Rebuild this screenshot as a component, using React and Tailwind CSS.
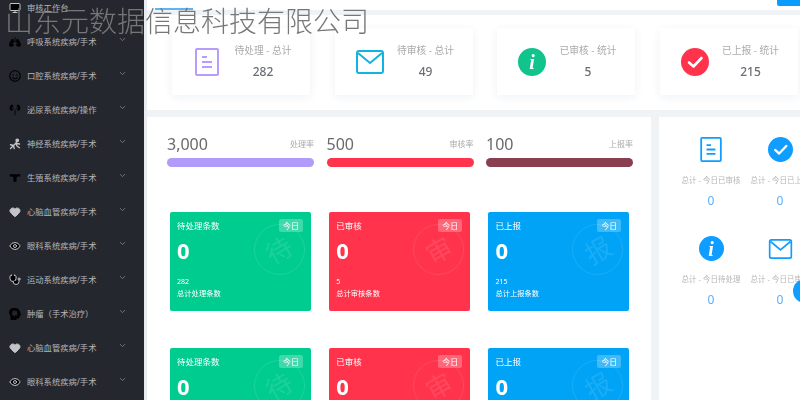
import React from "react";
import { ChevronDown, Stethoscope, MonitorCheck, Heart, Eye } from "lucide-react";
import { FaLungs, FaHeadSideVirus, FaRegSmile } from "react-icons/fa";
import { GiKidneys } from "react-icons/gi";

const font = { fontFamily: '"Noto Sans", "Noto Sans CJK SC", sans-serif' };

const Neuron = (p) => (
  <svg viewBox="0 0 16 16" fill="none" stroke="currentColor" strokeWidth="1.8" strokeLinecap="round" {...p}>
    <path d="M2 14l4-4 3-3 2-4M6 10l-4-1M9 7l5 1M9 7l2 4 3 2M6 10l1 4" />
    <circle cx="11" cy="3" r="1.6" fill="currentColor" />
  </svg>
);
const Uterus = (p) => (
  <svg viewBox="0 0 16 16" fill="currentColor" {...p}>
    <path d="M1 3h14v3h-3c-1 0-1.500 1-2 2.500V13H6V8.500C5.500 7 5 6 4 6H1z" />
  </svg>
);

const side = [
  [MonitorCheck, "审核工作台"],
  [FaLungs, "呼吸系统疾病/手术", 1],
  [FaRegSmile, "口腔系统疾病/手术", 1],
  [GiKidneys, "泌尿系统疾病/操作", 1],
  [Neuron, "神经系统疾病/手术", 1],
  [Uterus, "生殖系统疾病/手术", 1],
  [Heart, "心脑血管疾病/手术", 1, 1],
  [Eye, "眼科系统疾病/手术", 1],
  [Stethoscope, "运动系统疾病/手术", 1],
  [FaHeadSideVirus, "肿瘤（手术治疗）", 1],
  [Heart, "心脑血管疾病/手术", 1, 1],
  [Eye, "眼科系统疾病/手术", 1],
];

const DocIcon = ({ className }) => (
  <svg viewBox="0 0 24 28" fill="none" stroke="currentColor" strokeWidth="2" className={className}>
    <rect x="1" y="1" width="22" height="26" rx="1" />
    <path d="M7 9h5M7 14h10M7 19h10" />
  </svg>
);
const MailIcon = ({ className }) => (
  <svg viewBox="0 0 28 24" fill="none" stroke="currentColor" strokeWidth="2" className={className}>
    <rect x="1" y="1" width="26" height="22" rx="2" />
    <path d="M2 3l12 10L26 3" />
  </svg>
);
const CheckDisc = ({ className }) => (
  <svg viewBox="0 0 28 28" className={className}>
    <circle cx="14" cy="14" r="14" fill="currentColor" />
    <path d="M8 14.500l4.500 4L20.500 10" fill="none" stroke="#fff" strokeWidth="2.600" strokeLinecap="round" strokeLinejoin="round" />
  </svg>
);
const InfoDisc = ({ className }) => (
  <div className={`flex items-center justify-center rounded-full text-white ${className}`}>
    <span className="text-[20px] font-bold italic leading-none" style={{ fontFamily: '"Liberation Serif", serif' }}>i</span>
  </div>
);

const stats = [
  [<DocIcon className="h-[28px] w-[24px] text-[#b79cfb]" />, "待处理 - 总计", "282"],
  [<MailIcon className="h-[24px] w-[28px] text-[#12b3de]" />, "待审核 - 总计", "49"],
  [<InfoDisc className="h-[28px] w-[28px] bg-[#12c48b]" />, "已审核 - 统计", "5"],
  [<CheckDisc className="h-[28px] w-[28px] text-[#ff334b]" />, "已上报 - 统计", "215"],
];

const bars = [
  ["3,000", "处理率", "bg-[#b09bfb]"],
  ["500", "审核率", "bg-[#ff334b]"],
  ["100", "上报率", "bg-[#8a3f50]"],
];

const cards = [
  ["待处理条数", "待", "282", "总计处理条数", "bg-[#00cc90]"],
  ["已审核", "审", "5", "总计审核条数", "bg-[#ff334b]"],
  ["已上报", "报", "215", "总计上报条数", "bg-[#00a3f5]"],
];

const Card = ({ c }) => (
  <div className={`relative h-[99px] w-[141px] shrink-0 overflow-hidden rounded-[2px] px-[7px] pt-[7px] text-white ${c[4]}`}>
    <div className="flex items-center justify-between pr-[1px]">
      <span className="text-[8.500px] leading-[12px]">{c[0]}</span>
      <span className="flex h-[13px] w-[24px] items-center justify-center rounded-[2px] bg-white/25 text-[8px]">今日</span>
    </div>
    <div className="mt-[3px] text-[22px] font-bold leading-[30px]">0</div>
    <div className="mt-[12px] text-[7px] leading-[10px]">{c[2]}</div>
    <div className="mt-0 text-[7.300px] leading-[12px]">{c[3]}</div>
    <div className="absolute left-[84px] top-[12px] flex h-[51px] w-[51px] items-center justify-center rounded-full border border-white/10">
      <span className="-rotate-[30deg] text-[26px] leading-none text-white/10">{c[1]}</span>
    </div>
  </div>
);

const today = [
  [<DocIcon className="h-[25px] w-[22px] text-[#0f9dff]" />, "总计 - 今日已审核"],
  [<CheckDisc className="h-[25px] w-[25px] text-[#0f9dff]" />, "总计 - 今日已上报"],
  [<InfoDisc className="h-[25px] w-[25px] bg-[#0f9dff]" />, "总计 - 今日待处理"],
  [<MailIcon className="h-[20px] w-[25px] text-[#0f9dff]" />, "总计 - 今日已审核"],
];

export default function App() {
  return (
    <div className="relative h-[400px] w-[800px] overflow-hidden bg-[#f0f3f6]" style={font}>
      <div className="flex h-full w-full blur-[0.4px]">
        <aside className="h-full w-[144px] shrink-0 overflow-hidden bg-[#25272e]">
          <div className="-mt-[9px]">
            {side.map(([Icon, label, chev, fill], i) => (
              <div key={i} className="flex h-[34px] items-center text-[#c2c4c8]">
                <div className="flex w-[27px] shrink-0 justify-center pl-[3px]">
                  <Icon className="h-[12px] w-[12px]" fill={fill ? "currentColor" : undefined} />
                </div>
                <span className="w-[91px] shrink-0 whitespace-nowrap text-[8.300px] leading-[12px] text-[#b4b6bb]">{label}</span>
                {chev && <ChevronDown className="-mt-[5px] h-[9px] w-[9px] text-[#8a8c92]" />}
              </div>
            ))}
          </div>
        </aside>
        <div className="w-[3px] shrink-0 bg-[#e8ebef]" />
        <main className="flex min-w-0 flex-1 flex-col">
          <header className="flex h-[10px] shrink-0 items-start justify-between bg-white">
            <div className="ml-[8px] flex h-[10px] w-[38px] items-end justify-center border-b-[2px] border-[#5ab4f8]">
              <span className="-mt-[6px] self-start text-[6px] leading-[6px] text-[#5ab4f8]">首页</span>
            </div>
            <div className="h-[6px] w-[23px] rounded-bl-[2px] bg-[#0a9dff]" />
          </header>
          <section className="mt-[5px] flex h-[95px] shrink-0 gap-[24.500px] bg-white pl-[25px] pt-[13px]">
            {stats.map((s, i) => (
              <div key={i} className="flex h-[67px] w-[138px] shrink-0 items-center rounded-[2px] bg-white shadow-[0_2px_10px_rgba(30,50,90,0.07)]">
                <div className="flex w-[70px] shrink-0 justify-center">{s[0]}</div>
                <div className="flex w-[42px] flex-col items-center">
                  <span className="whitespace-nowrap text-[9.800px] leading-[14px] text-[#aaaaaa]">{s[1]}</span>
                  <span className="mt-[6px] text-[12px] font-medium leading-[16px] text-[#6b6e74]">{s[2]}</span>
                </div>
              </div>
            ))}
          </section>
          <div className="mt-[7px] flex min-h-0 flex-1 gap-[8px]">
            <section className="h-full w-[504px] shrink-0 overflow-hidden bg-white">
              <div className="flex gap-[12.500px] px-[20px] pt-[15px]">
                {bars.map((b) => (
                  <div key={b[0]} className="w-[147px] shrink-0">
                    <div className="flex items-center justify-between">
                      <span className="text-[16px] leading-[24px] text-[#6a6a6a]">{b[0]}</span>
                      <span className="text-[8px] text-[#aaaaaa]">{b[1]}</span>
                    </div>
                    <div className={`mt-[2px] h-[9px] rounded-full ${b[2]}`} />
                  </div>
                ))}
              </div>
              <div className="mt-[45px] grid grid-cols-[141px_141px_141px] gap-x-[18.200px] gap-y-[37px] pl-[23px]">
                {[...cards, ...cards].map((c, i) => <Card key={i} c={c} />)}
              </div>
            </section>
            <section className="relative h-full min-w-0 flex-1 overflow-hidden bg-white">
              <div className="grid w-[138px] grid-cols-[69px_69px] pl-[17.500px] pt-[20px]">
                {today.map((t, i) => (
                  <div key={i} className="flex h-[99px] w-[69px] flex-col items-center">
                    <div className="flex h-[25px] items-center">{t[0]}</div>
                    <span className="mt-[12px] whitespace-nowrap text-[7.500px] leading-[12px] text-[#b5b5b5]">{t[1]}</span>
                    <span className="mt-[7px] text-[12px] leading-[16px] text-[#5aaefc]">0</span>
                  </div>
                ))}
              </div>
            </section>
          </div>
        </main>
      </div>
      <div className="absolute left-[793px] top-[279px] h-[24px] w-[24px] rounded-full bg-[#0f9dff] blur-[0.4px]" />
      <div className="absolute left-[5px] top-[1px] whitespace-nowrap text-[28px] font-light leading-[38px] text-[#777777]" style={{ fontFamily: '"Noto Sans CJK SC", sans-serif' }}>山东元数据信息科技有限公司</div>
    </div>
  );
}
